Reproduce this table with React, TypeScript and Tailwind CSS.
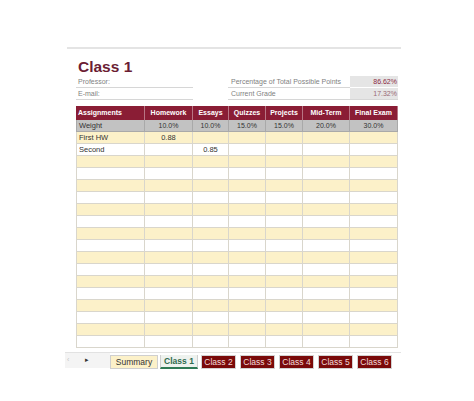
const COLS = ['Assignments', 'Homework', 'Essays', 'Quizzes', 'Projects', 'Mid-Term', 'Final Exam']
const WEIGHTS = ['10.0%', '10.0%', '15.0%', '15.0%', '20.0%', '30.0%']

const ROWS: string[][] = [
  ['First HW', '0.88', '', '', '', '', ''],
  ['Second', '', '0.85', '', '', '', ''],
  ...Array.from({ length: 16 }, () => ['', '', '', '', '', '', '']),
]

const TABS = ['Class 2', 'Class 3', 'Class 4', 'Class 5', 'Class 6']

export default function App() {
  return (
    <div className="w-[474px] h-[401px] bg-white font-['Liberation_Sans',Arial,sans-serif] text-[#333]">
      <div className="pt-[47px]">
        <div className="ml-[67px] w-[334px] h-[2px] bg-[#e4e4e4]" />

        <div className="ml-[76px] w-[322px]">
          <h1 className="mt-[9px] ml-[2px] h-[18px] text-[15.5px] leading-[18px] font-semibold text-[#6b1d33]">Class 1</h1>

          {/* professor / grade info */}
          <div className="flex text-[7px] text-[#7f7f7f]">
            <div className="w-[117px]">
              <div className="h-[12px] leading-[11px] pl-[2px] border-b border-[#d6d6d6]">Professor:</div>
              <div className="h-[12px] leading-[11px] pl-[2px] border-b border-[#d6d6d6]">E-mail:</div>
            </div>
            <div className="ml-[35px] w-[170px]">
              <div className="flex h-[12px]">
                <div className="flex-1 leading-[11px] pl-[3px] border-b border-[#d6d6d6]">Percentage of Total Possible Points</div>
                <div className="w-[48px] leading-[11px] pr-[1px] text-right bg-[#e5e5e5] text-[#8c2a42] border-b border-white">86.62%</div>
              </div>
              <div className="flex h-[12px]">
                <div className="flex-1 leading-[11px] pl-[3px] border-b border-[#d6d6d6]">Current Grade</div>
                <div className="w-[48px] leading-[11px] pr-[1px] text-right bg-[#e5e5e5] text-[#9a6a76] border-b border-[#d6d6d6]">17.32%</div>
              </div>
            </div>
          </div>

          {/* grade table */}
          <div className="mt-[6px] grid grid-cols-[69px_48px_36px_37px_37px_47px_48px]">
            {COLS.map((c, i) => (
              <div
                key={c}
                className={`h-[14px] leading-[14px] bg-[#8a1d35] text-white text-[7px] font-bold border-r border-[#b87584] whitespace-nowrap ${i === 0 ? 'pl-[2px]' : 'text-center'}`}
              >
                {c}
              </div>
            ))}

            <div className="h-[12px] leading-[11px] pl-[2px] bg-[#c2c2c2] text-[7.5px] border-r border-b border-[#a9a9a9] border-l">Weight</div>
            {WEIGHTS.map((w, i) => (
              <div key={i} className="h-[12px] leading-[11px] text-center bg-[#c2c2c2] text-[7px] border-r border-b border-[#a9a9a9]">
                {w}
              </div>
            ))}

            {ROWS.map((r, ri) =>
              r.map((v, ci) => (
                <div
                  key={`${ri}-${ci}`}
                  className={`h-[12px] leading-[11px] text-[7.5px] border-r border-b border-[#d9d6cc] ${ri % 2 === 0 ? 'bg-[#fcf1c9]' : 'bg-white'} ${ci === 0 ? 'pl-[2px] border-l' : 'text-center'}`}
                >
                  {v}
                </div>
              )),
            )}
          </div>
        </div>

        {/* sheet tabs */}
        <div className="mt-[4px] ml-[65px] w-[336px] flex items-start h-[18px] border-t border-[#e2e2e2] text-[8.5px]">
          <div className="w-[45px] h-[15px] flex items-center bg-[#f4f4f4] text-[7px]">
            <span className="ml-[2px] text-[#c4c4c4]">‹</span>
            <span className="ml-[16px] text-[#333]">▸</span>
          </div>
          <div className="mt-[2px] w-[48px] h-[14px] leading-[13px] text-center bg-[#fcf1c9] border border-[#cfcfcf] text-[#333]">Summary</div>
          <div className="mt-[2px] ml-[2px] w-[38px] h-[14px] leading-[12px] text-center bg-[#eef2ee] border-x border-[#cfcfcf] border-b-2 border-b-[#2f7a55] font-bold text-[#2f6b4d]">
            Class 1
          </div>
          <div className="mt-[2px] ml-[3px] flex gap-[4px]">
            {TABS.map((t) => (
              <div key={t} className="w-[35px] h-[14px] leading-[13px] text-center bg-[#7a0a0a] border border-[#d2d2d2] text-[#f3dada] whitespace-nowrap">
                {t}
              </div>
            ))}
          </div>
        </div>
      </div>
    </div>
  )
}
